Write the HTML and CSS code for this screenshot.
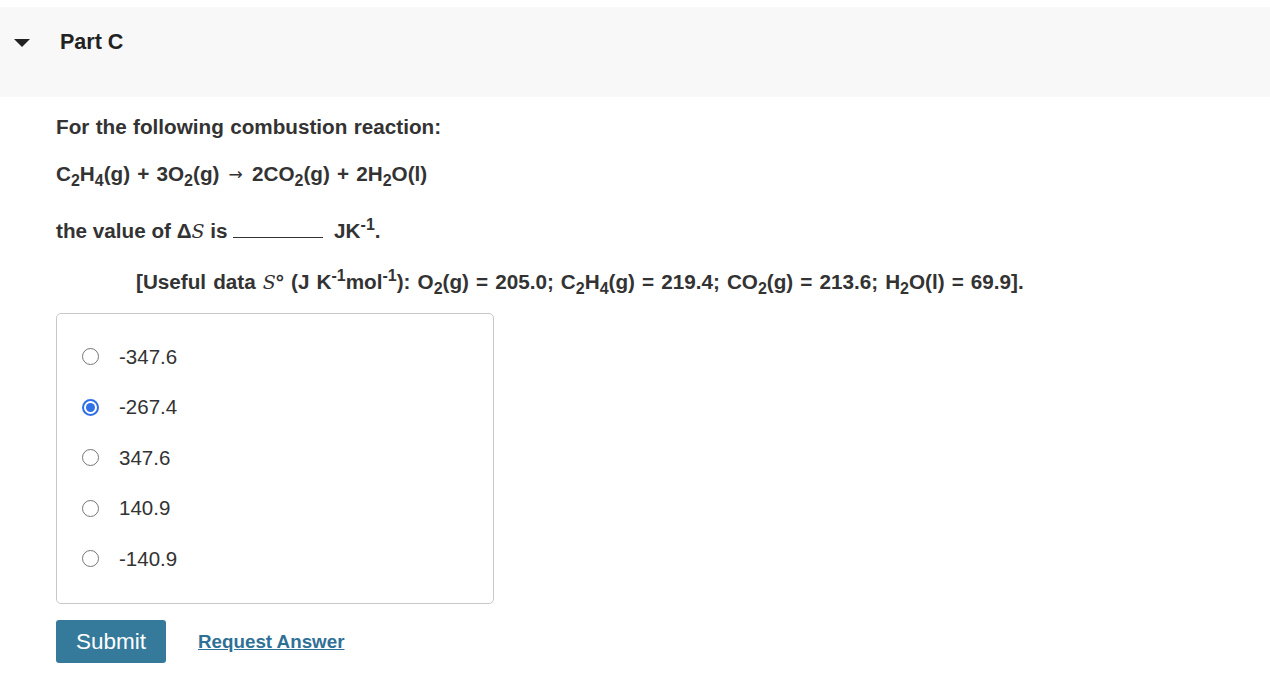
FILE: index.html
```html
<!DOCTYPE html>
<html>
<head>
<meta charset="utf-8">
<link rel="stylesheet" href="styles.css">
</head>
<body>
<div class="page">
  <div class="part-header">
    <span class="caret"></span>
    <h2 class="part-title">Part C</h2>
  </div>
  <div class="part-body">
    <p class="q">For the following combustion reaction:</p>
    <p class="q">C<sub>2</sub>H<sub>4</sub>(g) + 3O<sub>2</sub>(g) <span class="arrow">→</span> 2CO<sub>2</sub>(g) + 2H<sub>2</sub>O(l)</p>
    <p class="q tight">the value of Δ<i class="sym">S</i> is <span class="blank"></span> JK<sup>-1</sup>.</p>
    <p class="q data">[Useful data <i class="sym">S</i>° (J K<sup>-1</sup>mol<sup>-1</sup>): O<sub>2</sub>(g) = 205.0; C<sub>2</sub>H<sub>4</sub>(g) = 219.4; CO<sub>2</sub>(g) = 213.6; H<sub>2</sub>O(l) = 69.9].</p>
    <div class="choices">
      <label class="choice"><span class="radio"></span><span>-347.6</span></label>
      <label class="choice"><span class="radio checked"></span><span>-267.4</span></label>
      <label class="choice"><span class="radio"></span><span>347.6</span></label>
      <label class="choice"><span class="radio"></span><span>140.9</span></label>
      <label class="choice"><span class="radio"></span><span>-140.9</span></label>
    </div>
    <div class="actions">
      <button class="submit">Submit</button>
      <a class="request" href="#">Request Answer</a>
    </div>
  </div>
</div>
</body>
</html>
```
FILE: styles.css
```css
html, body {
  margin: 0;
  padding: 0;
  background: #fff;
}
body {
  font-family: "Liberation Sans", Arial, Helvetica, sans-serif;
  color: #333;
}
.page {
  padding-top: 7px;
}
.part-header {
  background: #f8f8f8;
  height: 90px;
  display: flex;
  align-items: center;
  padding-left: 14px;
  box-sizing: border-box;
  padding-bottom: 20px;
}
.caret {
  width: 0;
  height: 0;
  border-left: 8px solid transparent;
  border-right: 8px solid transparent;
  border-top: 8px solid #222;
  margin-right: 30px;
  margin-top: 2px;
}
.part-title {
  margin: 0;
  font-size: 21.5px;
  font-weight: bold;
  color: #222;
}
.part-body {
  padding-left: 56px;
  padding-top: 17px;
}
.q {
  margin: 0 0 22px 0;
  font-size: 20.7px;
  font-weight: bold;
  line-height: 25px;
  height: 25px;
  white-space: nowrap;
  word-spacing: 1px;
}
.q:nth-child(1) { word-spacing: 0.6px; }
.q:nth-child(2) { margin-top: 20px; margin-bottom: 32px; word-spacing: 1.4px; }
.q:nth-child(3) { margin-bottom: 26px; }
.q.tight { word-spacing: 0; }
.data { word-spacing: 1.3px; }
.q sub, .q sup {
  font-size: 16px;
  line-height: 0;
}
.q sub { vertical-align: -5px; }
.q sup { vertical-align: 8px; }
.arrow {
  font-family: "DejaVu Sans", sans-serif;
  font-weight: normal;
  font-size: 17px;
  padding: 0 2px;
  vertical-align: 1px;
}
.sym {
  font-family: "DejaVu Serif", "Liberation Serif", serif;
  font-style: italic;
  font-weight: normal;
  font-size: 19px;
}
.data {
  padding-left: 80px;
  margin-bottom: 0;
}
.blank {
  display: inline-block;
  width: 90px;
  border-bottom: 1px solid #333;
  margin: 0 5px 0 0;
  height: 18px;
}
.choices {
  margin-top: 19px;
  width: 438px;
  height: 291px;
  box-sizing: border-box;
  border: 1px solid #c8c8c8;
  border-radius: 5px;
  padding-top: 30px;
  padding-left: 25px;
}
.choice {
  display: flex;
  align-items: center;
  height: 25px;
  margin-bottom: 25.5px;
  font-size: 20.5px;
  color: #333;
}
.radio {
  width: 17px;
  height: 17px;
  box-sizing: border-box;
  border: 1px solid #767676;
  border-radius: 50%;
  margin-right: 20px;
  position: relative;
  background: #fff;
}
.radio.checked {
  border: 2px solid #2f6fe8;
  background: #fff;
}
.radio.checked::after {
  content: "";
  position: absolute;
  left: 2px;
  top: 2px;
  width: 9px;
  height: 9px;
  border-radius: 50%;
  background: #2f6fe8;
}
.actions {
  margin-top: 16px;
  display: flex;
  align-items: center;
}
.submit {
  width: 110px;
  height: 43px;
  background: #357a9b;
  color: #fff;
  border: none;
  border-radius: 3px;
  font-family: "Liberation Sans", Arial, sans-serif;
  font-size: 22.5px;
  padding: 0;
}
.request {
  margin-left: 32px;
  color: #2f7096;
  font-weight: bold;
  font-size: 18.8px;
  text-decoration: underline;
}
```
